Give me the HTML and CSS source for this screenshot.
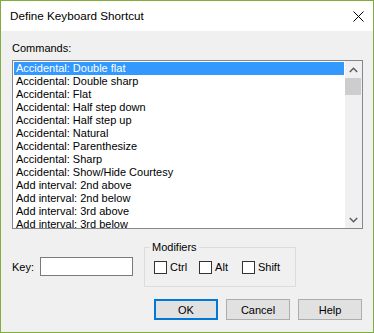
FILE: index.html
```html
<!DOCTYPE html>
<html lang="en">
<head>
    <meta charset="UTF-8">
    <title>Define Keyboard Shortcut</title>
    <link rel="stylesheet" href="styles.css">
</head>
<body>

<div class="window">
    <div class="titlebar">
        <span class="title">Define Keyboard Shortcut</span>
        <svg class="close" width="11" height="11" viewBox="0 0 11 11">
            <path d="M0.5 0.5 L10.5 10.5 M10.5 0.5 L0.5 10.5" stroke="#000" stroke-width="1" fill="none"/>
        </svg>
    </div>

    <div class="content">
        <div class="caption">Commands:</div>

        <div class="listbox">
            <div class="items">
                <div class="item selected">Accidental: Double flat</div>
                <div class="item">Accidental: Double sharp</div>
                <div class="item">Accidental: Flat</div>
                <div class="item">Accidental: Half step down</div>
                <div class="item">Accidental: Half step up</div>
                <div class="item">Accidental: Natural</div>
                <div class="item">Accidental: Parenthesize</div>
                <div class="item">Accidental: Sharp</div>
                <div class="item">Accidental: Show/Hide Courtesy</div>
                <div class="item">Add interval: 2nd above</div>
                <div class="item">Add interval: 2nd below</div>
                <div class="item">Add interval: 3rd above</div>
                <div class="item">Add interval: 3rd below</div>
            </div>
            <div class="scrollbar">
                <div class="arrow">
                    <svg width="9" height="6" viewBox="0 0 9 6">
                        <polyline points="0.8,5 4.5,1.3 8.2,5" stroke="#606060" stroke-width="1.6" fill="none"/>
                    </svg>
                </div>
                <div class="thumb"></div>
                <div class="track"></div>
                <div class="arrow">
                    <svg width="9" height="6" viewBox="0 0 9 6">
                        <polyline points="0.8,1 4.5,4.7 8.2,1" stroke="#606060" stroke-width="1.6" fill="none"/>
                    </svg>
                </div>
            </div>
        </div>

        <div class="options">
            <div class="key-group">
                <label for="key">Key:</label>
                <input type="text" id="key">
            </div>

            <fieldset class="modifiers">
                <legend>Modifiers</legend>
                <div class="checks">
                    <span class="check"><span class="box"></span>Ctrl</span>
                    <span class="check alt"><span class="box"></span>Alt</span>
                    <span class="check"><span class="box"></span>Shift</span>
                </div>
            </fieldset>
        </div>

        <div class="buttons">
            <button class="default">OK</button>
            <button>Cancel</button>
            <button>Help</button>
        </div>
    </div>
</div>

</body>
</html>
```

FILE: styles.css
```css
body {
    margin: 0;
    font-family: 'Liberation Sans', Arial, sans-serif;
    font-size: 11px;
    color: #000;
    background-color: #f0f0f0;
}
.window {
    width: 374px;
    height: 333px;
    box-sizing: border-box;
    border: 1px solid #7fae3f;
    background-color: #f0f0f0;
}
.titlebar {
    height: 30px;
    background-color: #fff;
    display: flex;
    align-items: center;
    justify-content: space-between;
    padding: 0 9px 0 9px;
}
.title {
    font-size: 11.7px;
    line-height: 14px;
    margin-top: -1px;
}
.close {
    display: block;
}
.content {
    padding: 0 10px 0 11px;
}
.caption {
    line-height: 15px;
    margin-top: 10px;
    margin-bottom: 4px;
}
.listbox {
    height: 169px;
    box-sizing: border-box;
    border: 1px solid #828790;
    background-color: #fff;
    display: flex;
}
.items {
    flex: 1;
    padding: 1px;
    overflow: hidden;
}
.item {
    height: 13px;
    line-height: 13px;
    padding-left: 2px;
    white-space: nowrap;
}
.item.selected {
    background-color: #3399ff;
    color: #fff;
}
.scrollbar {
    width: 17px;
    background-color: #f0f0f0;
    display: flex;
    flex-direction: column;
}
.arrow {
    height: 17px;
    display: flex;
    align-items: center;
    justify-content: center;
}
.thumb {
    height: 17px;
    margin: 0 1px 0 0;
    background-color: #cdcdcd;
}
.track {
    flex: 1;
}
.options {
    display: flex;
    align-items: flex-start;
    margin-top: 11px;
}
.key-group {
    display: flex;
    align-items: center;
    margin-top: 17px;
}
.key-group label {
    width: 28px;
    margin-top: 1px;
}
.key-group input {
    width: 93px;
    height: 19px;
    box-sizing: border-box;
    border: 1px solid #7a7a7a;
    padding: 0 3px;
    font: inherit;
    background-color: #fff;
}
.modifiers {
    margin: 0 0 0 11px;
    width: 152px;
    box-sizing: border-box;
    border: 1px solid #dcdcdc;
    padding: 0 0 12px 5px;
}
.modifiers legend {
    padding: 0 2px;
    line-height: 15px;
}
.checks {
    display: flex;
    padding: 6px 0 0 4px;
}
.check {
    display: flex;
    align-items: center;
    height: 13px;
    line-height: 13px;
    margin-right: 12px;
}
.check.alt {
    margin-right: 14px;
}
.box {
    width: 13px;
    height: 13px;
    box-sizing: border-box;
    border: 1px solid #333;
    background-color: #fff;
    margin-right: 3px;
}
.buttons {
    display: flex;
    justify-content: flex-end;
    gap: 8px;
    margin-top: 12px;
    margin-right: 1px;
}
button {
    width: 64px;
    height: 21px;
    box-sizing: border-box;
    border: 1px solid #adadad;
    background-color: #e1e1e1;
    font: inherit;
    color: #000;
    padding: 0;
}
button.default {
    border: 2px solid #0078d7;
}
```
